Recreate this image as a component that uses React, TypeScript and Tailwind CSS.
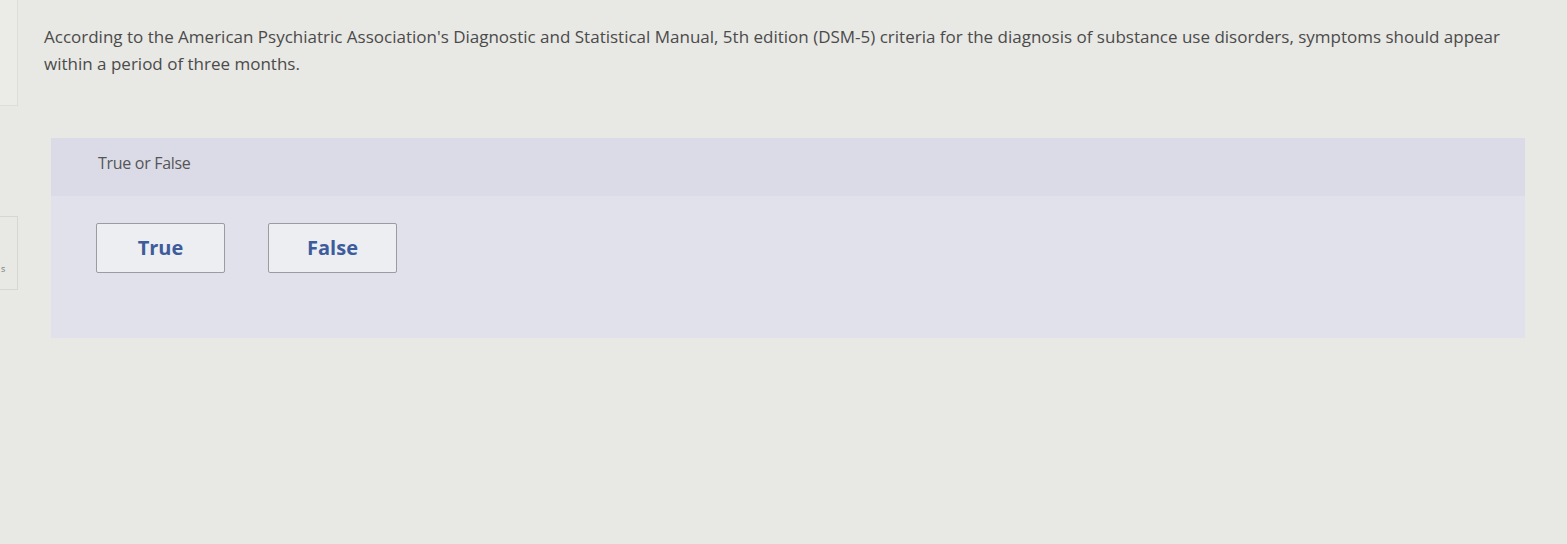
import React from "react";

const choices = ["True", "False"];

export default function App() {
  return (
    <div
      className="relative h-[544px] w-[1567px] overflow-hidden bg-[#e8e8e4] text-[#4b4b4b]"
      style={{ fontFamily: "'Open Sans', Lato, sans-serif" }}
    >
      {/* neighbouring sidebar edge */}
      <div className="absolute left-0 top-0 flex h-full w-[18px] flex-col">
        <div className="h-[106px] border-r border-b border-[#dcdcd8] bg-[#ebebe8]" />
        <div className="mt-[110px] flex h-[74px] items-end border-y border-r border-[#d6d6d2] pb-[14px] pl-[1px] text-[9px] text-[#777]">
          s
        </div>
      </div>

      <div className="pl-[44px] pr-[58px] pt-[23px]">
        <p className="w-[1466px] text-[17px] leading-[27px]">
          According to the American Psychiatric Association's Diagnostic and
          Statistical Manual, 5th edition (DSM-5) criteria for the diagnosis of
          substance use disorders, symptoms should appear within a period of
          three months.
        </p>

        <div className="ml-[7px] mt-[61px] w-[1474px] bg-[#e0e1ea]">
          <div className="h-[58px] bg-[#dadbe7] pl-[47px] pt-[13px] text-[16px] tracking-[-0.3px] text-[#555]">
            True or False
          </div>
          <div className="flex h-[142px] items-start gap-[43px] pl-[45px] pt-[27px]">
            {choices.map((c) => (
              <button
                key={c}
                className="flex h-[50px] w-[129px] items-center justify-center rounded-[2px] border border-[#9a9ca2] bg-[#eceef2] text-[20px] font-bold text-[#3e5c9c]"
              >
                {c}
              </button>
            ))}
          </div>
        </div>
      </div>
    </div>
  );
}
